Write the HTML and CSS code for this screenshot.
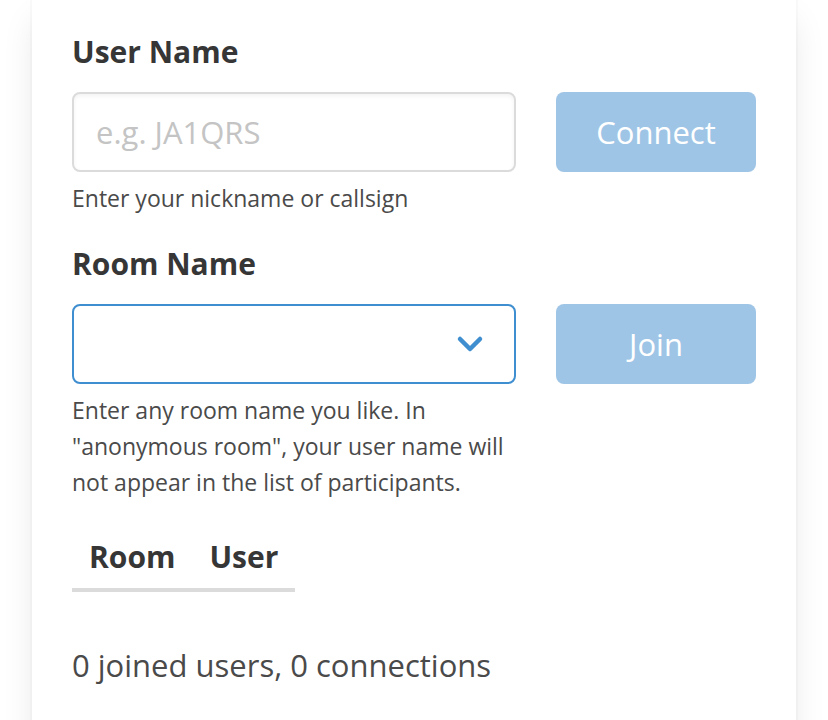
FILE: index.html
```html
<!DOCTYPE html>
<html lang="en">
<head>
<meta charset="utf-8">
<title>Join room</title>
<link rel="stylesheet" href="styles.css">
</head>
<body>
<div class="page">
  <div class="card">
    <div class="field">
      <label class="label" for="user">User Name</label>
      <div class="row">
        <div class="control">
          <input id="user" class="input" type="text" placeholder="e.g. JA1QRS">
        </div>
        <button class="button" disabled>Connect</button>
      </div>
      <p class="help">Enter your nickname or callsign</p>
    </div>
    <div class="field">
      <label class="label">Room Name</label>
      <div class="row">
        <div class="control">
          <div class="select">
            <svg class="chevron" width="28" height="18" viewBox="0 0 28 18"><polyline points="4,4 14,14 24,4" fill="none" stroke="#3e8ed0" stroke-width="4.5" stroke-linecap="round" stroke-linejoin="round"/></svg>
          </div>
        </div>
        <button class="button" disabled>Join</button>
      </div>
      <p class="help narrow">Enter any room name you like. In "anonymous room", your user name will not appear in the list of participants.</p>
    </div>
    <div class="tabs">
      <ul>
        <li><a>Room</a></li>
        <li><a>User</a></li>
      </ul>
    </div>
    <p class="stats">0 joined users, 0 connections</p>
  </div>
</div>
</body>
</html>
```

FILE: styles.css
```css
html, body {
  margin: 0;
  padding: 0;
  background: #ffffff;
}
body {
  font-family: "Open Sans", "Noto Sans", sans-serif;
  color: #4a4a4a;
  overflow: hidden;
}
.page {
  padding: 0 32px;
}
.card {
  background: #fff;
  box-shadow: 0 16px 32px -4px rgba(10,10,10,0.1), 0 0 0 2px rgba(10,10,10,0.02);
  padding: 31px 40px 200px;
}
.field {
  margin-bottom: 27px;
}
.label {
  display: block;
  font-size: 30px;
  font-weight: 700;
  line-height: 42px;
  color: #363636;
  margin-bottom: 19px;
}
.row {
  display: flex;
  gap: 40px;
}
.control {
  flex: 1;
}
.input {
  box-sizing: border-box;
  width: 100%;
  height: 80px;
  border: 2px solid #dbdbdb;
  border-radius: 8px;
  padding: 0 22px;
  font-family: inherit;
  font-size: 31px;
  color: #363636;
  box-shadow: inset 0 2px 4px rgba(10,10,10,0.05);
  outline: none;
}
.input::placeholder {
  color: #c4c4c4;
}
.select {
  box-sizing: border-box;
  height: 80px;
  border: 2px solid #3e8ed0;
  border-radius: 8px;
  display: flex;
  align-items: center;
  justify-content: flex-end;
  padding-right: 30px;
}
.chevron {
  display: block;
}
.button {
  width: 200px;
  height: 80px;
  border: none;
  border-radius: 8px;
  background: #9fc5e6;
  color: #fff;
  font-family: inherit;
  font-size: 31px;
  padding: 0;
}
.help {
  margin: 8px 0 0;
  font-size: 23px;
  line-height: 36px;
  color: #4a4a4a;
}
.help.narrow {
  max-width: 444px;
}
.tabs {
  margin-top: 24px;
}
.tabs ul {
  display: inline-flex;
  list-style: none;
  margin: 0;
  padding: 0;
  border-bottom: 4px solid #dbdbdb;
}
.tabs a {
  display: block;
  padding: 9px 17px 10px;
  font-size: 30px;
  font-weight: 700;
  line-height: 42px;
  color: #363636;
}
.stats {
  margin: 52px 0 0;
  font-size: 31px;
  line-height: 42px;
  color: #4a4a4a;
}
```
